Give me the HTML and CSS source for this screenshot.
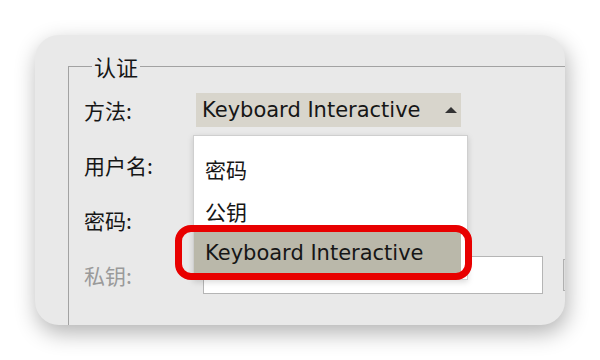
FILE: index.html
```html
<!DOCTYPE html>
<html lang="zh">
<head>
  <meta charset="UTF-8">
  <title>认证</title>
  <link rel="stylesheet" href="styles.css">
</head>
<body>
  <div class="window">
    <fieldset class="group">
      <legend>认证</legend>
      <div class="form-row">
        <label>方法:</label>
        <div class="combo">
          <span>Keyboard Interactive</span>
          <span class="arrow"></span>
        </div>
      </div>
      <div class="form-row">
        <label>用户名:</label>
      </div>
      <div class="form-row">
        <label>密码:</label>
      </div>
      <div class="form-row">
        <label class="disabled">私钥:</label>
        <div class="field-wrap">
          <input type="text" class="text-input" disabled>
          <span class="browse"></span>
        </div>
      </div>
    </fieldset>

    <ul class="popup">
      <li>密码</li>
      <li>公钥</li>
      <li class="selected">Keyboard Interactive</li>
    </ul>
    <div class="highlight-ring"></div>
  </div>
</body>
</html>
```

FILE: styles.css
```css
* {
  margin: 0;
  padding: 0;
  box-sizing: border-box;
}

body {
  background-color: #fff;
  font-family: 'DejaVu Sans', 'Noto Sans CJK SC', sans-serif;
  color: #161616;
  width: 600px;
  height: 360px;
  overflow: hidden;
  padding: 35px 0 0 35px;
}

.window {
  position: relative;
  width: 530px;
  height: 290px;
  background-color: #e9e9e9;
  border-radius: 24px;
  box-shadow: 2px 8px 22px rgba(0, 0, 0, 0.3);
  overflow: hidden;
  padding: 19px 0 0 33px;
}

.group {
  width: 560px;
  height: 300px;
  border: 1px solid #a2a2a2;
  padding: 0 0 0 15px;
}

.group legend {
  font-family: 'Noto Sans CJK SC', sans-serif;
  font-size: 22px;
  line-height: 24px;
  padding: 0 2px;
  margin-left: 8px;
}

.form-row {
  display: flex;
  align-items: center;
  height: 55px;
}

.form-row:first-of-type {
  margin-top: 4px;
}

.form-row label {
  width: 112px;
  font-family: 'Noto Sans CJK SC', sans-serif;
  font-size: 21px;
}

.form-row label.disabled {
  color: #9a9a9a;
}

.combo {
  display: flex;
  align-items: center;
  justify-content: space-between;
  width: 265px;
  height: 34px;
  background-color: #d8d5cc;
  padding: 0 4px 0 6px;
  font-size: 21px;
}

.arrow {
  width: 0;
  height: 0;
  border-left: 6px solid transparent;
  border-right: 6px solid transparent;
  border-bottom: 6px solid #333;
}

.field-wrap {
  display: flex;
  align-items: center;
  gap: 20px;
  margin-left: 7px;
}

.text-input {
  width: 340px;
  height: 38px;
  background-color: #fff;
  border: 1px solid #b5b5b5;
}

.browse {
  width: 30px;
  height: 32px;
  border: 1px solid #b0b0b0;
  background-color: #ddd;
}

.popup {
  position: absolute;
  left: 158px;
  top: 100px;
  width: 275px;
  height: 145px;
  list-style: none;
  background-color: #fff;
  border: 1px solid #cfcfcf;
  box-shadow: 0 2px 6px rgba(0, 0, 0, 0.15);
  padding-top: 12px;
}

.popup li {
  height: 42px;
  line-height: 42px;
  padding-left: 11px;
  font-size: 21px;
  font-family: 'Noto Sans CJK SC', sans-serif;
}

.popup li.selected {
  font-family: 'DejaVu Sans', sans-serif;
  background-color: #bab8aa;
  margin-right: 6px;
}

.highlight-ring {
  position: absolute;
  left: 140px;
  top: 190px;
  width: 297px;
  height: 55px;
  border: 7px solid #e80000;
  border-radius: 16px;
}
```
